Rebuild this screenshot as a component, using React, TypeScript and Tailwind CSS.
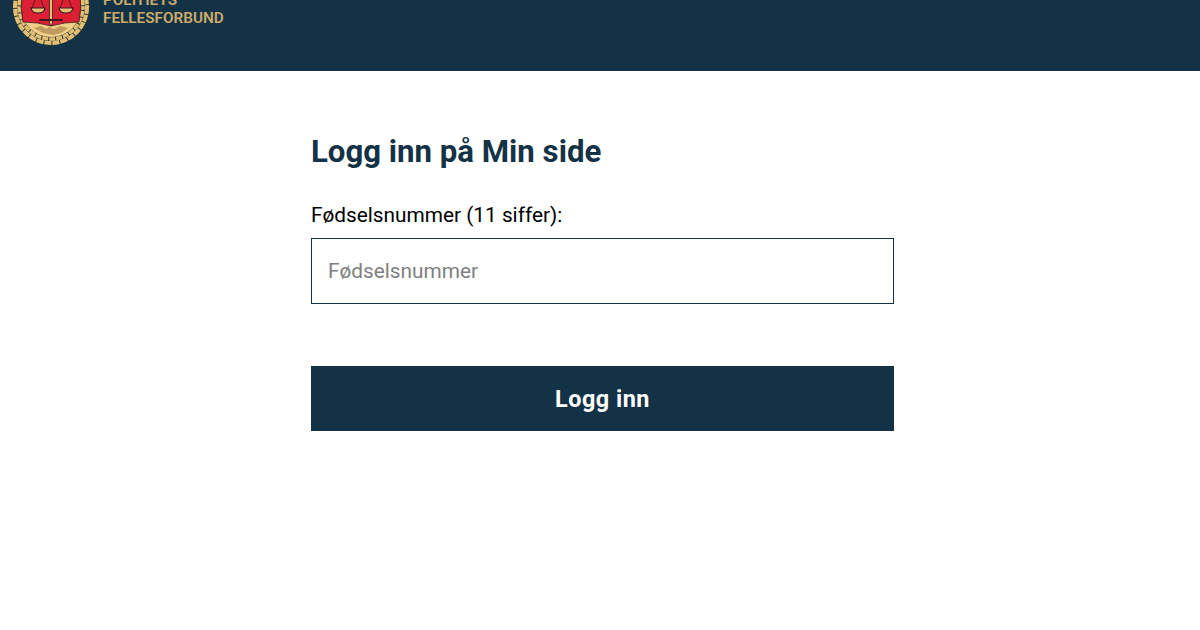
function Logo() {
  return (
    <svg width="78" height="78" viewBox="0 0 78 78" className="shrink-0">
      <circle cx="39" cy="39" r="38.5" fill="#2b3a35" />
      <circle cx="39" cy="39" r="36" fill="none" stroke="#e3bf73" strokeWidth="4" strokeDasharray="7 1" />
      <circle cx="39" cy="39" r="32" fill="none" stroke="#e3bf73" strokeWidth="3.5" strokeDasharray="6 1" strokeDashoffset="3" />
      <circle cx="39" cy="39" r="30" fill="#f0cf87" />
      <path d="M9.800 28A30 30 0 0 1 68.200 28Q69.500 40 67 54Q52 54 39 58Q26 54 11 54Q8.500 40 9.800 28Z" fill="#dc1f32" stroke="#3a1a20" strokeWidth="0.8" />
      <path d="M22 60l7-2 5 3 3-2 5 2 6-3 8 2-7 5-8 2-10-2Z" fill="#a8854f" opacity="0.7" />
      <path d="M37.500 12h3v43l-1.500 3-1.500-3Z" fill="#e3bf73" stroke="#3a1a20" strokeWidth="0.8" />
      <path d="M28 52h22" stroke="#3a1a20" strokeWidth="2" strokeLinecap="round" />
      <path d="M20 40l6-16 6 16M48 40l6-16 6 16" fill="none" stroke="#3a1a20" strokeWidth="0.8" />
      <path d="M26 24h28" stroke="#3a1a20" strokeWidth="1.200" />
      <path d="M19 40h14c-.5 3-2.500 5-7 5s-6.500-2-7-5ZM47 40h14c-.5 3-2.500 5-7 5s-6.500-2-7-5Z" fill="#e3bf73" stroke="#3a1a20" strokeWidth="1.200" />
    </svg>
  );
}

export default function App() {
  return (
    <div className="h-[630px] overflow-hidden bg-white font-['Roboto',sans-serif]">
      <header className="flex h-[71px] items-end gap-[13px] overflow-hidden bg-[#143246] pb-[25px] pl-[12px]">
        <Logo />
        <div className="mb-[19px] flex flex-col text-[15.3px] font-semibold leading-[18px] text-[#cbab6b]">
          <span>POLITIETS</span>
          <span>FELLESFORBUND</span>
        </div>
      </header>
      <main className="ml-[311px] w-[583px] pt-[62px]">
        <h1 className="text-[31.2px] font-bold leading-[38px] text-[#143246]">Logg inn på Min side</h1>
        <label htmlFor="fnr" className="mt-[30px] block text-[20.8px] leading-[28px] text-black">
          Fødselsnummer (11 siffer):
        </label>
        <input
          id="fnr"
          placeholder="Fødselsnummer"
          className="mt-[9px] block h-[66px] w-full border border-[#143246] px-4 text-[20.8px] outline-none placeholder:text-[#808080]"
        />
        <button className="mt-[62px] block h-[65px] w-full bg-[#143246] pt-[2px] text-[23.4px] font-bold tracking-[0.5px] text-white">
          Logg inn
        </button>
      </main>
    </div>
  );
}
